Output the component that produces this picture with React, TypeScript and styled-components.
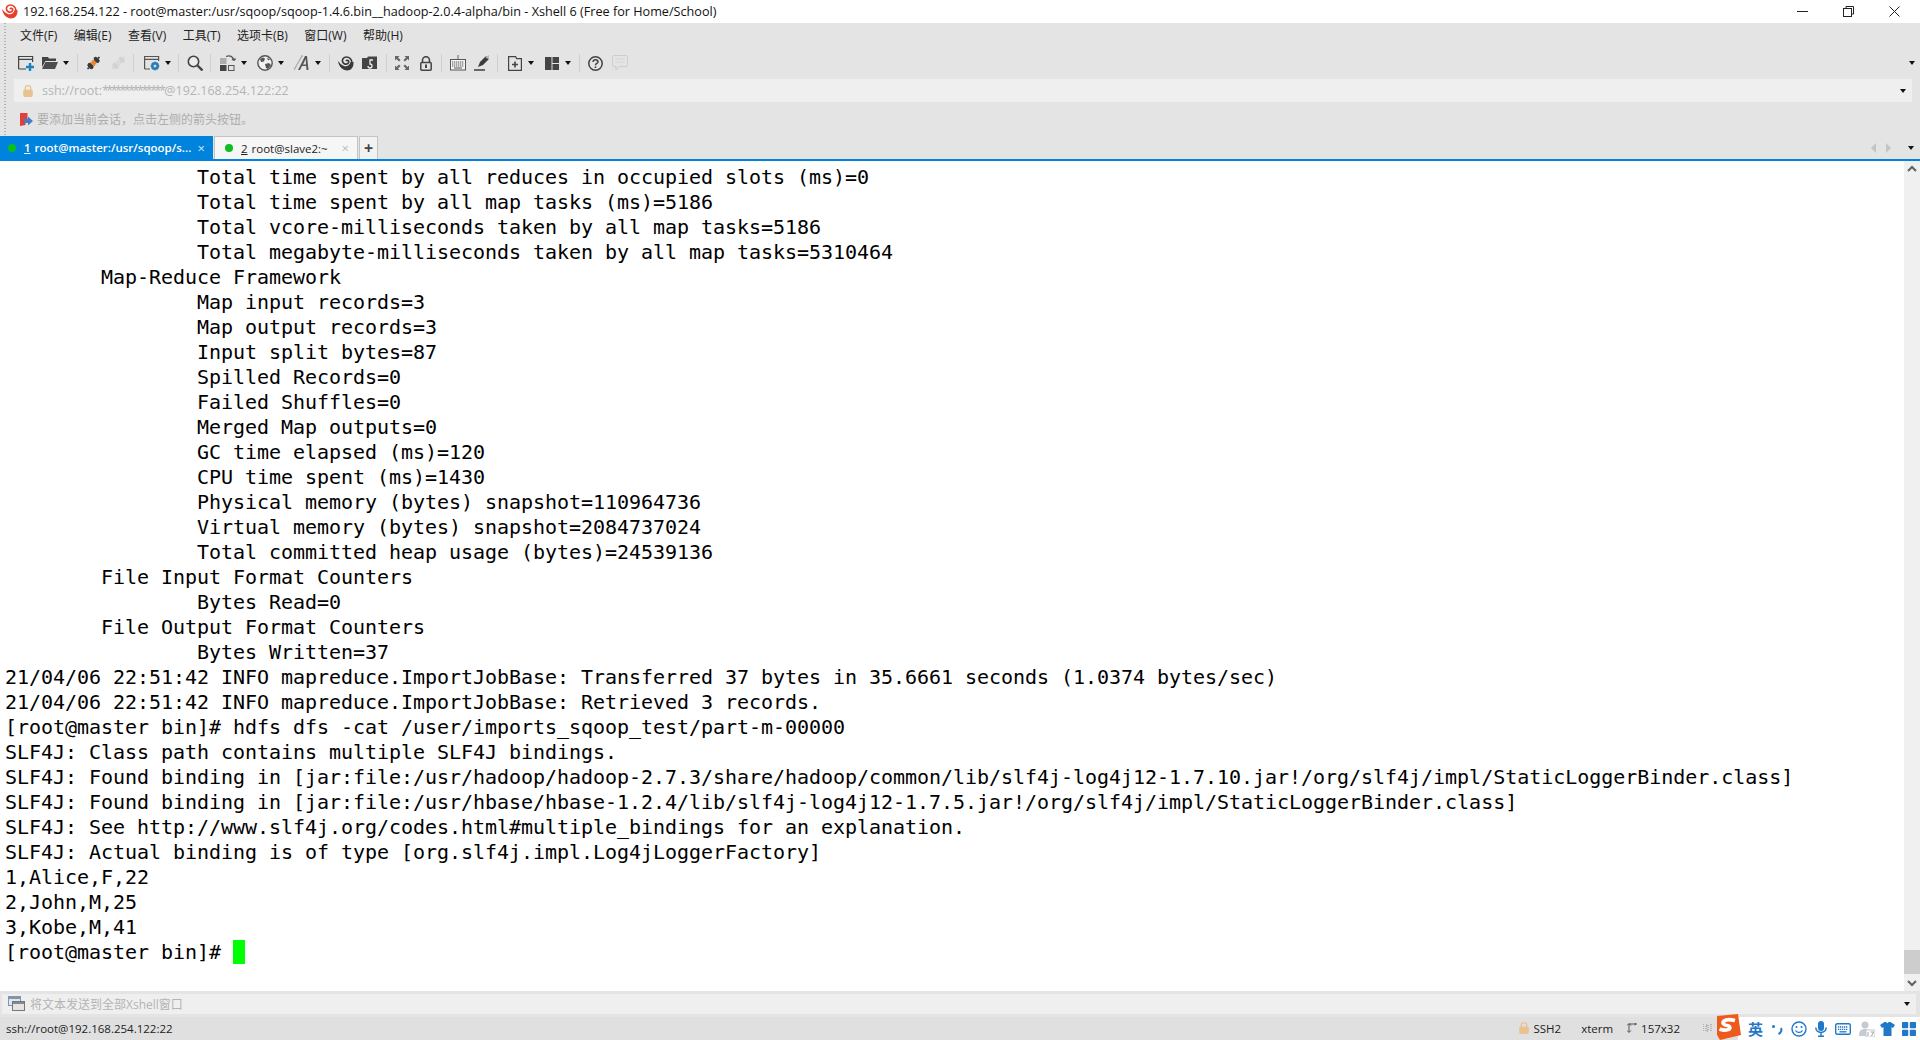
import React from 'react';
import styled, { createGlobalStyle } from 'styled-components';

const GlobalStyle = createGlobalStyle`
  html, body {
    margin: 0;
    padding: 0;
    width: 1920px;
    height: 1040px;
    overflow: hidden;
    background: #fff;
  }
  * {
    box-sizing: border-box;
  }
`;

const UI_FONT = `"Open Sans", "Noto Sans CJK SC", sans-serif`;

const lines = [
  '                Total time spent by all reduces in occupied slots (ms)=0',
  '                Total time spent by all map tasks (ms)=5186',
  '                Total vcore-milliseconds taken by all map tasks=5186',
  '                Total megabyte-milliseconds taken by all map tasks=5310464',
  '        Map-Reduce Framework',
  '                Map input records=3',
  '                Map output records=3',
  '                Input split bytes=87',
  '                Spilled Records=0',
  '                Failed Shuffles=0',
  '                Merged Map outputs=0',
  '                GC time elapsed (ms)=120',
  '                CPU time spent (ms)=1430',
  '                Physical memory (bytes) snapshot=110964736',
  '                Virtual memory (bytes) snapshot=2084737024',
  '                Total committed heap usage (bytes)=24539136',
  '        File Input Format Counters',
  '                Bytes Read=0',
  '        File Output Format Counters',
  '                Bytes Written=37',
  '21/04/06 22:51:42 INFO mapreduce.ImportJobBase: Transferred 37 bytes in 35.6661 seconds (1.0374 bytes/sec)',
  '21/04/06 22:51:42 INFO mapreduce.ImportJobBase: Retrieved 3 records.',
  '[root@master bin]# hdfs dfs -cat /user/imports_sqoop_test/part-m-00000',
  'SLF4J: Class path contains multiple SLF4J bindings.',
  'SLF4J: Found binding in [jar:file:/usr/hadoop/hadoop-2.7.3/share/hadoop/common/lib/slf4j-log4j12-1.7.10.jar!/org/slf4j/impl/StaticLoggerBinder.class]',
  'SLF4J: Found binding in [jar:file:/usr/hbase/hbase-1.2.4/lib/slf4j-log4j12-1.7.5.jar!/org/slf4j/impl/StaticLoggerBinder.class]',
  'SLF4J: See http://www.slf4j.org/codes.html#multiple_bindings for an explanation.',
  'SLF4J: Actual binding is of type [org.slf4j.impl.Log4jLoggerFactory]',
  '1,Alice,F,22',
  '2,John,M,25',
  '3,Kobe,M,41',
];

const menus = ['文件(F)', '编辑(E)', '查看(V)', '工具(T)', '选项卡(B)', '窗口(W)', '帮助(H)'];

const Window = styled.div`
  width: 1920px;
  height: 1040px;
  display: flex;
  flex-direction: column;
  overflow: hidden;
  font-family: ${UI_FONT};
  color: #000;
`;

const TitleBar = styled.div`
  height: 23px;
  flex: none;
  display: flex;
  align-items: center;
  background: #fff;
  padding: 0 0 1px 2px;
`;

const TitleText = styled.div`
  margin-left: 5px;
  font-size: 12.65px;
  white-space: pre;
  color: #111;
`;

const WindowButtons = styled.div`
  margin-left: auto;
  display: flex;
  align-items: center;
  gap: 35px;
  padding-right: 20px;
`;

const Chrome = styled.div`
  flex: none;
  height: 113px;
  display: flex;
  flex-direction: column;
  background-color: #e4e4e4;
  background-image: repeating-linear-gradient(to bottom, #b4b4b4 0 1px, transparent 1px 3px);
  background-size: 2px 100%;
  background-position: 4px 0;
  background-repeat: no-repeat;
`;

const MenuBar = styled.div`
  height: 27px;
  display: flex;
  align-items: center;
  gap: 16.5px;
  padding: 0 0 3px 20px;
  font-size: 12px;
  color: #222;
`;

const Toolbar = styled.div`
  height: 29px;
  display: flex;
  align-items: center;
  padding: 0 5px 3px 18px;
`;

const Tool = styled.span<{ $ml: number; $w: number }>`
  display: flex;
  align-items: center;
  flex: none;
  margin-left: ${(p) => p.$ml}px;
  width: ${(p) => p.$w}px;
`;

const Sep = styled.span<{ $ml: number }>`
  flex: none;
  width: 1px;
  height: 18px;
  margin-left: ${(p) => p.$ml}px;
  background: #cfcfcf;
`;

const Caret = styled.span<{ $ml?: number; $right?: boolean }>`
  flex: none;
  width: 0;
  height: 0;
  border-left: 3px solid transparent;
  border-right: 3px solid transparent;
  border-top: 4px solid #111;
  margin-left: ${(p) => (p.$right ? 'auto' : `${p.$ml ?? 5}px`)};
`;

const AddressBar = styled.div`
  height: 23px;
  margin: 0 8px 0 14px;
  display: flex;
  align-items: center;
  padding: 0 6px 0 9px;
  background: #efefef;
  font-size: 12.5px;
  color: #b4b4b4;
  gap: 9px;
`;

const Masked = styled.span`
  letter-spacing: -2.5px;
  margin-right: 1px;
`;

const HintRow = styled.div`
  height: 34px;
  display: flex;
  align-items: center;
  padding-left: 20px;
  gap: 4px;
  font-size: 12px;
  color: #adadad;
`;

const TabStrip = styled.div`
  flex: none;
  height: 25px;
  display: flex;
  align-items: flex-end;
  background: #e4e4e4;
  border-bottom: 2px solid #0083dc;
  padding-right: 6px;
`;

const Tab = styled.div<{ $active?: boolean; $w: number }>`
  width: ${(p) => p.$w}px;
  height: 23px;
  flex: none;
  margin-right: 1px;
  display: flex;
  align-items: center;
  padding-left: ${(p) => (p.$active ? 8 : 10)}px;
  font-size: 11.5px;
  white-space: nowrap;
  font-weight: ${(p) => (p.$active ? 600 : 400)};
  background: ${(p) => (p.$active ? '#0083dc' : '#f6f6f6')};
  color: ${(p) => (p.$active ? '#fff' : '#222')};
  border: ${(p) => (p.$active ? 'none' : '1px solid #c4c4c4')};
  border-bottom: none;
`;

const Dot = styled.span`
  width: 8px;
  height: 8px;
  border-radius: 50%;
  background: #0bbf1c;
  flex: none;
  margin-right: 8px;
`;

const TabNum = styled.u`
  margin-right: 4px;
`;

const TabClose = styled.span<{ $active?: boolean }>`
  margin-left: auto;
  margin-right: 8px;
  font-size: 13px;
  font-weight: 400;
  color: ${(p) => (p.$active ? '#cfe8fa' : '#bdbdbd')};
`;

const NewTab = styled.div`
  width: 19px;
  height: 23px;
  flex: none;
  display: flex;
  align-items: center;
  justify-content: center;
  background: #f2f2f2;
  border: 1px solid #c4c4c4;
  border-bottom: none;
  font-size: 16px;
  font-weight: 700;
  color: #444;
`;

const TabArrows = styled.div`
  margin-left: auto;
  height: 23px;
  display: flex;
  align-items: center;
  gap: 10px;
`;

const ArrowLeft = styled.span`
  width: 0;
  height: 0;
  border-top: 5px solid transparent;
  border-bottom: 5px solid transparent;
  border-right: 5px solid #c4c4c4;
`;

const ArrowRight = styled.span`
  width: 0;
  height: 0;
  border-top: 5px solid transparent;
  border-bottom: 5px solid transparent;
  border-left: 5px solid #c4c4c4;
  margin-right: 7px;
`;

const TerminalArea = styled.div`
  flex: none;
  height: 830px;
  display: flex;
  background: #fff;
`;

const Terminal = styled.div`
  flex: 1;
  padding: 4px 0 0 5px;
  font-family: "DejaVu Sans Mono", monospace;
  font-size: 20px;
  letter-spacing: -0.04px;
  line-height: 25px;
  color: #000;
`;

const Row = styled.div`
  height: 25px;
  white-space: pre;
`;

const Cursor = styled.span`
  display: inline-block;
  width: 12px;
  height: 24px;
  background: #00ff00;
  vertical-align: top;
`;

const Scrollbar = styled.div`
  width: 16px;
  flex: none;
  background: #f0f0f0;
  display: flex;
  flex-direction: column;
  align-items: center;
`;

const ScrollTrack = styled.div`
  flex: 1;
  width: 100%;
  display: flex;
  align-items: flex-end;
  padding-bottom: 1px;
`;

const ScrollThumb = styled.div`
  width: 100%;
  height: 24px;
  background: #cdcdcd;
`;

const ScrollBtn = styled.div`
  height: 16px;
  flex: none;
  display: flex;
  align-items: center;
`;

const Compose = styled.div`
  flex: none;
  height: 26px;
  padding: 3px 4px 3px 2px;
  background: #e4e4e4;
`;

const ComposeInput = styled.div`
  height: 20px;
  display: flex;
  align-items: center;
  padding: 0 6px 1px 6px;
  background: #efefef;
  font-size: 12px;
  color: #b4b4b4;
  gap: 5px;
`;

const StatusBar = styled.div`
  flex: none;
  height: 23px;
  position: relative;
  display: flex;
  align-items: center;
  background: #e0e0e0;
  padding: 0 208px 1px 6px;
  font-size: 11.5px;
  color: #222;
`;

const StatusItem = styled.span<{ $ml?: number }>`
  display: flex;
  align-items: center;
  gap: 4px;
  margin-left: ${(p) => (p.$ml === undefined ? 'auto' : `${p.$ml}px`)};
`;

const ImeBar = styled.div`
  position: absolute;
  right: 0;
  bottom: 0;
  width: 182px;
  height: 23px;
  background: #fff;
  display: flex;
  align-items: center;
  padding-left: 10px;
`;

const ImeSlot = styled.span<{ $ml: number }>`
  display: flex;
  flex: none;
  margin-left: ${(p) => p.$ml}px;
`;

const ImeLogo = styled.div`
  position: absolute;
  left: 1714px;
  top: -3px;
  width: 27px;
  height: 26px;
  z-index: 1;
`;

const ImeChar = styled.span`
  font-size: 15px;
  font-weight: 700;
  line-height: 1;
  font-family: "Noto Sans CJK SC", sans-serif;
  color: #1f78c8;
  width: 16px;
`;

const Svg: React.FC<React.PropsWithChildren<{ w?: number; h?: number; vb?: string }>> = ({ w = 16, h = 16, vb, children }) => (
  <svg width={w} height={h} viewBox={vb || `0 0 ${w} ${h}`} style={{ display: 'block', flex: 'none' }}>
    {children}
  </svg>
);

const ShellShape = ({ color }: { color: string }) => (
  <>
    <path d="M0 6C2 8 3 10 6 11c3 1 6-1 6.500-4h3c.5 5-2.500 8.500-6.500 8.500S1 12 0 6z" fill={color} />
    <path d="M14 8c0-4-3-6-5.500-6C5.500 2 4 4.500 4.500 6.500 5 8.500 7 9.500 9 9c1.500-.5 2-2 1.500-3C10 5 8.500 5 8 6" fill="none" stroke={color} strokeWidth="1.700" />
  </>
);

const XshellLogo = () => (
  <Svg>
    <ShellShape color="#e4412c" />
  </Svg>
);

const NewSession = () => (
  <Svg>
    <path d="M.6 14V1.500h14V7M.6 14H8M.6 4.300h14" fill="none" stroke="#444" strokeWidth="1.200" />
    <path d="M12 8v8M8 12h8" stroke="#1c7fbf" strokeWidth="2.400" />
  </Svg>
);

const OpenFolder = () => (
  <Svg>
    <path d="M0 2h6l1 1.500h7V6H3.500L0 12z" fill="#444" />
    <path d="M0 14l3.500-7H16l-3 7z" fill="#4c4c4c" />
  </Svg>
);

const Plug = ({ off }: { off?: boolean }) => {
  const dark = off ? '#d2d2d2' : '#383838';
  const mid = off ? '#dadada' : '#e8872e';
  return (
    <Svg w={17} h={16}>
      <g transform="rotate(-45 8.500 8)">
        <path d="M0 8h2" stroke={dark} strokeWidth="1.600" />
        <rect x="2" y="4.500" width="4.500" height="7" rx="2.500" fill={dark} />
        <rect x="6.500" y="6" width="5" height="4" fill={mid} />
        <path d="M7.500 5v6M9.500 5v6" stroke={mid} strokeWidth="1.300" />
        <rect x="11" y="4.500" width="4" height="7" rx="2.500" fill={dark} />
        <path d="M15 8h2" stroke={dark} strokeWidth="1.600" />
      </g>
    </Svg>
  );
};

const WindowGear = () => (
  <Svg>
    <path d="M.6 14V1.500h14V6M.6 14H6M.6 4.300h14" fill="none" stroke="#555" strokeWidth="1.200" />
    <circle cx="11" cy="11" r="3" fill="none" stroke="#2a7fb8" strokeWidth="2" />
    <path d="M11 6.500v9M6.500 11h9M8 8l6 6M14 8l-6 6" stroke="#2a7fb8" strokeWidth="1.200" />
    <circle cx="11" cy="11" r="1.200" fill="#e4e4e4" />
  </Svg>
);

const Magnifier = () => (
  <Svg>
    <circle cx="6.500" cy="6.500" r="5.200" fill="#ececec" stroke="#444" strokeWidth="1.600" />
    <path d="M10.500 10.500l5 5" stroke="#444" strokeWidth="2.400" />
  </Svg>
);

const Transfer = () => (
  <Svg>
    <rect x="0" y="3" width="6.500" height="6" fill="#b2aca6" />
    <rect x="0" y="10" width="6.500" height="6" fill="#444" />
    <rect x="8.500" y="10.500" width="5.500" height="5" fill="none" stroke="#555" />
    <path d="M6 1.500c4-1.500 7 0 8 4M14 5.500l-2-1.500M14 5.500l1.500-2" fill="none" stroke="#555" strokeWidth="1.300" />
  </Svg>
);

const Globe = () => (
  <Svg>
    <circle cx="8" cy="8" r="7.200" fill="#f0f0f0" stroke="#555" strokeWidth="1.400" />
    <path d="M3 4l3-1.500 2 1-1 3-3 .5zM8 9l4-1 2 2-3 4-2-1zM10 2.500l3 2-2 1z" fill="#555" />
  </Svg>
);

const FontA = () => (
  <Svg>
    <path d="M0 15L8 1h1" fill="none" stroke="#b0b0b0" strokeWidth="1.400" />
    <path d="M4 15L11 1h2l1.500 14h-2l-.3-4H8l-2 4zM9 9.500h3L11.700 4z" fill="#555" />
  </Svg>
);

const Swirl = () => (
  <Svg>
    <ShellShape color="#3a3a3a" />
  </Svg>
);

const ShellFolder = () => (
  <Svg>
    <path d="M0 3h5l1-1.500h9V14H0z" fill="#444" />
    <path d="M6 11a2 2 0 102-2V5h3" fill="none" stroke="#eee" strokeWidth="1.300" />
  </Svg>
);

const FullScreen = () => (
  <Svg w={14} h={14}>
    <path d="M0 0h4.500L3 1.500l2.500 2.500-1.500 1.500L1.500 3 0 4.500zM14 0v4.500L12.500 3 10 5.500 8.500 4 11 1.500 9.500 0zM0 14V9.500L1.500 11 4 8.500 5.500 10 3 12.500 4.500 14zM14 14H9.500l1.500-1.500L8.500 10 10 8.500l2.500 2.500L14 9.500z" fill="#666" />
  </Svg>
);

const Lock = ({ color = '#444', filled, w = 12, h = 15 }: { color?: string; filled?: boolean; w?: number; h?: number }) => (
  <Svg w={w} h={h} vb="0 0 12 15">
    <path d="M2.500 6.500V4.200a3.500 3.500 0 017 0v2.300" fill="none" stroke={color} strokeWidth="1.600" />
    <rect x=".8" y="6.500" width="10.400" height="7.700" rx="1" fill={filled ? color : 'none'} stroke={color} strokeWidth="1.500" />
    {!filled && <rect x="5" y="8.500" width="2" height="3.500" fill={color} />}
  </Svg>
);

const Keyboard = () => (
  <Svg h={16}>
    <path d="M8 4V0" stroke="#666" />
    <rect x=".5" y="4.500" width="15" height="10.500" fill="#f5f5f5" stroke="#555" />
    <path d="M2 7h12M2 9h12M2 11h12" stroke="#555" strokeDasharray="1.300 .7" />
    <path d="M4 13h8" stroke="#555" />
  </Svg>
);

const Marker = () => (
  <Svg>
    <path d="M4 12l2-5 6-6 3 3-6 6z" fill="#3c3c3c" />
    <path d="M11 2l4-2v4.500z" fill="#b8b8b8" />
    <path d="M0 15h11" stroke="#333" strokeWidth="1.400" />
  </Svg>
);

const NewFolder = () => (
  <Svg w={14} h={15}>
    <path d="M.6 14.400V.6h7l1 2h4.800v11.800z" fill="none" stroke="#444" strokeWidth="1.200" />
    <path d="M7 5.500v6M4 8.500h6" stroke="#444" strokeWidth="1.600" />
  </Svg>
);

const LayoutIcon = () => (
  <Svg w={14} h={13}>
    <rect x="0" y="0" width="6.500" height="13" fill="#444" />
    <rect x="7.500" y="0" width="6.500" height="6" fill="#444" />
    <rect x="7.500" y="7" width="6.500" height="6" fill="#444" />
  </Svg>
);

const Help = () => (
  <Svg w={15} h={15}>
    <circle cx="7.500" cy="7.500" r="6.700" fill="none" stroke="#444" strokeWidth="1.500" />
    <path d="M5 6a2.500 2.300 0 115 0c0 1.500-2.500 1.500-2.500 3.200" fill="none" stroke="#444" strokeWidth="1.500" />
    <rect x="6.700" y="10.400" width="1.600" height="1.600" fill="#444" />
  </Svg>
);

const Chat = () => (
  <Svg>
    <path d="M2 .5h12a1.500 1.500 0 011.500 1.500v8a1.500 1.500 0 01-1.500 1.500H7L4 15v-3.500H2A1.500 1.500 0 01.5 10V2A1.500 1.500 0 012 .5z" fill="none" stroke="#cdcdcd" />
    <path d="M3.500 4h9M3.500 7h9" stroke="#d4d4d4" />
  </Svg>
);

const HintIcon = () => (
  <Svg w={13} h={13}>
    <path d="M0 0h7.500v6H5.500v6L0 13z" fill="#e0403c" />
    <path d="M4 6h4V3.500L13 8l-5 4.500V10H4z" fill="#3f7fc4" />
  </Svg>
);

const ComposeIcon = () => (
  <Svg w={17} h={15}>
    <rect x=".5" y=".5" width="12" height="9" fill="#dfe6ee" stroke="#7f96b0" />
    <rect x="1" y="1" width="11" height="2" fill="#7f96b0" />
    <rect x="4.500" y="5.500" width="12" height="9" fill="#e4e4e4" stroke="#777" />
    <rect x="5" y="6" width="11" height="2" fill="#888" />
  </Svg>
);

const ResizeIcon = () => (
  <Svg w={10} h={10}>
    <path d="M2 1v8M2 1H9M0 2.500L2 .5 4 2.500M7.500 0 9.500 1 7.500 2M0 7.500L2 9.500 4 7.500" fill="none" stroke="#555" />
  </Svg>
);

const Chevron = ({ down }: { down?: boolean }) => (
  <Svg>
    <path d={down ? 'M4 6l4 4 4-4' : 'M4 10l4-4 4 4'} fill="none" stroke="#606060" strokeWidth="2" />
  </Svg>
);

const Smile = () => (
  <Svg>
    <circle cx="8" cy="8" r="7" fill="none" stroke="#1f78c8" strokeWidth="1.400" />
    <circle cx="5.500" cy="6" r="1" fill="#1f78c8" />
    <circle cx="10.500" cy="6" r="1" fill="#1f78c8" />
    <path d="M4.500 9.500c1.500 2.500 5.500 2.500 7 0" fill="none" stroke="#1f78c8" strokeWidth="1.300" />
  </Svg>
);

const Mic = () => (
  <Svg w={12} h={16}>
    <rect x="3" y="0" width="6" height="10" rx="3" fill="#1f78c8" />
    <path d="M.8 6.500c0 6.500 10.400 6.500 10.400 0M6 12v3M3 15.300h6" fill="none" stroke="#1f78c8" strokeWidth="1.500" />
  </Svg>
);

const ImeKeyboard = () => (
  <Svg w={16} h={12}>
    <rect x=".7" y=".7" width="14.600" height="10.600" rx="1.500" fill="none" stroke="#1f78c8" strokeWidth="1.400" />
    <path d="M3 4h10M3 6.300h10" stroke="#1f78c8" strokeWidth="1.300" strokeDasharray="1.300 .7" />
    <path d="M4.500 8.800h7" stroke="#1f78c8" strokeWidth="1.300" />
  </Svg>
);

const ImeUser = () => (
  <Svg>
    <circle cx="6" cy="4" r="3.500" fill="#c4cbd2" />
    <path d="M0 14c0-4 2-6 6-6 2 0 3 .5 4 1.500H7V15H0z" fill="#c4cbd2" />
    <rect x="7" y="9" width="9" height="7" fill="#fff" stroke="#c4cbd2" />
    <path d="M9 11v4M11.500 11h3l-2 4" fill="none" stroke="#a9b0b8" strokeWidth="1.100" />
  </Svg>
);

const Shirt = () => (
  <Svg w={15} h={14}>
    <path d="M4.500 0h2c0 1.500 2 1.500 2 0h2L15 3l-2 3-1.500-1V14h-8V5L2 6 0 3z" fill="#1f78c8" />
  </Svg>
);

const ImeGrid = () => (
  <Svg w={14} h={14}>
    <rect x="0" y="0" width="6.200" height="6.200" rx=".8" fill="#1f78c8" />
    <rect x="7.800" y="0" width="6.200" height="6.200" rx=".8" fill="#1f78c8" />
    <rect x="0" y="7.800" width="6.200" height="6.200" rx=".8" fill="#1f78c8" />
    <rect x="7.800" y="7.800" width="6.200" height="6.200" rx=".8" fill="#1f78c8" />
  </Svg>
);

const SogouLogo = () => (
  <Svg w={27} h={26}>
    <path d="M3 2L24 0l3 21-21 5-3-5z" fill="#ee5a1c" />
    <path d="M21 6.500c-4-1-9-1-11 .5-2.500 2 0 4 3 4.500 4 .8 3.500 3.500.5 4.300-2.500.6-5 .3-8-.8" fill="none" stroke="#fff" strokeWidth="3.600" />
  </Svg>
);

const MinIcon = () => (
  <Svg w={11} h={11}><path d="M0 5.500h11" stroke="#222" /></Svg>
);

const RestoreIcon = () => (
  <Svg w={11} h={11}>
    <path d="M3 2.500V.5h7.500V8h-2" fill="none" stroke="#222" />
    <rect x=".5" y="2.500" width="8" height="8" fill="none" stroke="#222" />
  </Svg>
);

const CloseIcon = () => (
  <Svg w={11} h={11}><path d="M.5.500l10 10M10.500.500l-10 10" stroke="#222" /></Svg>
);

function App() {
  return (
    <Window>
      <GlobalStyle />
      <TitleBar>
        <XshellLogo />
        <TitleText>192.168.254.122 - root@master:/usr/sqoop/sqoop-1.4.6.bin__hadoop-2.0.4-alpha/bin - Xshell 6 (Free for Home/School)</TitleText>
        <WindowButtons>
          <MinIcon />
          <RestoreIcon />
          <CloseIcon />
        </WindowButtons>
      </TitleBar>

      <Chrome>
        <MenuBar>
          {menus.map((m) => (
            <span key={m}>{m}</span>
          ))}
        </MenuBar>

        <Toolbar>
          <Tool $ml={0} $w={16}><NewSession /></Tool>
          <Tool $ml={8} $w={16}><OpenFolder /></Tool>
          <Caret />
          <Sep $ml={8} />
          <Tool $ml={7} $w={17}><Plug /></Tool>
          <Tool $ml={8} $w={17}><Plug off /></Tool>
          <Sep $ml={6} />
          <Tool $ml={10} $w={16}><WindowGear /></Tool>
          <Caret />
          <Sep $ml={7} />
          <Tool $ml={8} $w={16}><Magnifier /></Tool>
          <Sep $ml={7} />
          <Tool $ml={9} $w={16}><Transfer /></Tool>
          <Caret />
          <Tool $ml={10} $w={16}><Globe /></Tool>
          <Caret />
          <Tool $ml={10} $w={16}><FontA /></Tool>
          <Caret />
          <Sep $ml={8} />
          <Tool $ml={8} $w={16}><Swirl /></Tool>
          <Tool $ml={8} $w={16}><ShellFolder /></Tool>
          <Sep $ml={8} />
          <Tool $ml={8} $w={14}><FullScreen /></Tool>
          <Tool $ml={11} $w={12}><Lock /></Tool>
          <Sep $ml={9} />
          <Tool $ml={8} $w={16}><Keyboard /></Tool>
          <Tool $ml={8} $w={16}><Marker /></Tool>
          <Sep $ml={7} />
          <Tool $ml={10} $w={14}><NewFolder /></Tool>
          <Caret $ml={6} />
          <Tool $ml={11} $w={14}><LayoutIcon /></Tool>
          <Caret $ml={6} />
          <Sep $ml={8} />
          <Tool $ml={8} $w={15}><Help /></Tool>
          <Tool $ml={9} $w={16}><Chat /></Tool>
          <Caret $right />
        </Toolbar>

        <AddressBar>
          <Lock color="#e8c391" filled w={10} h={12} />
          <span>ssh://root:<Masked>**************</Masked>@192.168.254.122:22</span>
          <Caret $right />
        </AddressBar>

        <HintRow>
          <HintIcon />
          <span>要添加当前会话{'\uFF0C'}点击左侧的箭头按钮。</span>
        </HintRow>
      </Chrome>

      <TabStrip>
        <Tab $active $w={213}>
          <Dot />
          <TabNum>1</TabNum>root@master:/usr/sqoop/s...
          <TabClose $active>×</TabClose>
        </Tab>
        <Tab $w={144}>
          <Dot />
          <TabNum>2</TabNum>root@slave2:~
          <TabClose>×</TabClose>
        </Tab>
        <NewTab>+</NewTab>
        <TabArrows>
          <ArrowLeft />
          <ArrowRight />
          <Caret $ml={0} />
        </TabArrows>
      </TabStrip>

      <TerminalArea>
        <Terminal>
          {lines.map((l, i) => (
            <Row key={i}>{l}</Row>
          ))}
          <Row>
            {'[root@master bin]# '}
            <Cursor />
          </Row>
        </Terminal>
        <Scrollbar>
          <ScrollBtn><Chevron /></ScrollBtn>
          <ScrollTrack><ScrollThumb /></ScrollTrack>
          <ScrollBtn><Chevron down /></ScrollBtn>
        </Scrollbar>
      </TerminalArea>

      <Compose>
        <ComposeInput>
          <ComposeIcon />
          <span>将文本发送到全部Xshell窗口</span>
          <Caret $right />
        </ComposeInput>
      </Compose>

      <StatusBar>
        <span>ssh://root@192.168.254.122:22</span>
        <StatusItem><Lock color="#e8c391" filled w={10} h={12} />SSH2</StatusItem>
        <StatusItem $ml={20}>xterm</StatusItem>
        <StatusItem $ml={14}><ResizeIcon />157x32</StatusItem>
        <StatusItem $ml={23}>
          <Svg w={9} h={10}><path d="M0 1v8M8 1v8M3 2h2v6H3z" fill="none" stroke="#888" strokeDasharray="1 1" /></Svg>
        </StatusItem>
        <ImeLogo><SogouLogo /></ImeLogo>
        <ImeBar>
          <ImeSlot $ml={0}><ImeChar>英</ImeChar></ImeSlot>
          <ImeSlot $ml={8}>
            <Svg w={11} h={12}>
              <rect x="0" y="2" width="3" height="3" rx="1.500" fill="#1f78c8" />
              <path d="M9 5c1 2 0 5-2.500 6" fill="none" stroke="#1f78c8" strokeWidth="2" />
            </Svg>
          </ImeSlot>
          <ImeSlot $ml={8}><Smile /></ImeSlot>
          <ImeSlot $ml={8}><Mic /></ImeSlot>
          <ImeSlot $ml={8}><ImeKeyboard /></ImeSlot>
          <ImeSlot $ml={8}><ImeUser /></ImeSlot>
          <ImeSlot $ml={5}><Shirt /></ImeSlot>
          <ImeSlot $ml={7}><ImeGrid /></ImeSlot>
        </ImeBar>
      </StatusBar>
    </Window>
  );
}

export default App;
